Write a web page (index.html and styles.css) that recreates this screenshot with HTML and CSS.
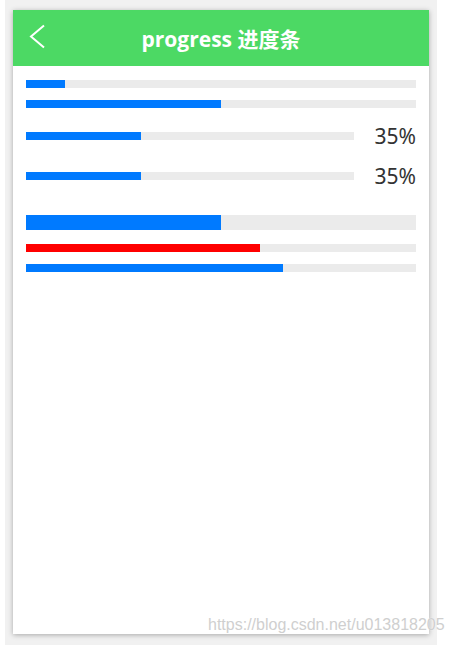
FILE: index.html
```html
<html>
  <head>
    <meta charset="UTF-8">
    <title>progress 进度条</title>
    <link rel="stylesheet" href="styles.css">
  </head>
  <body>
    <div class="frame">
      <div class="phone">
        <header class="bar-head">
          <svg class="back" width="18" height="26" viewBox="0 0 18 26">
            <polyline points="15,1.5 2,12.5 15,23.5" fill="none" stroke="#fff" stroke-width="2"/>
          </svg>
          <h1 class="title">progress 进度条</h1>
        </header>

        <div class="content">
          <!-- 基本 -->
          <div class="progress thin first"><span style="width: 10%"></span></div>
          <div class="progress thin m12"><span style="width: 50%"></span></div>

          <!-- 数字付き -->
          <div class="row m13">
            <div class="progress thin"><span style="width: 35%"></span></div>
            <div class="num">35%</div>
          </div>
          <div class="row m10">
            <div class="progress thin"><span style="width: 35%"></span></div>
            <div class="num">35%</div>
          </div>

          <!-- 色・高さ -->
          <div class="progress thick m24"><span style="width: 50%"></span></div>
          <div class="progress thin red m14"><span style="width: 60%"></span></div>
          <div class="progress thin m12"><span style="width: 66%"></span></div>
        </div>
      </div>
    </div>
    <div class="mark">https://blog.csdn.net/u013818205</div>
  </body>
</html>
```

FILE: styles.css
```css
body {
  margin: 0;
  background: #fff;
  font-family: 'Open Sans', 'Noto Sans CJK SC', sans-serif;
}

.frame {
  box-sizing: border-box;
  width: 432px;
  height: 645px;
  margin-left: 5px;
  padding: 10px 8px 11px 8px;
  background: #f1f1f1;
}

.phone {
  height: 100%;
  background: #fff;
  box-shadow: 0 1px 5px rgba(0, 0, 0, 0.3);
}

.bar-head {
  position: relative;
  height: 56px;
  background: #4cd964;
  display: flex;
  align-items: center;
  justify-content: center;
}

.back {
  position: absolute;
  left: 16px;
  top: 14px;
}

.title {
  margin: 0;
  color: #fff;
  font-size: 21px;
  font-weight: bold;
  font-family: 'Open Sans', 'Noto Sans CJK SC', sans-serif;
}

.content {
  padding: 14px 13px;
}

.progress {
  background: #ebebeb;
}

.progress span {
  display: block;
  height: 100%;
  background: #007aff;
}

.progress.thin {
  height: 8px;
}

.progress.thick {
  height: 15px;
}

.progress.red span {
  background: #ff0000;
}

.row {
  height: 30px;
  display: flex;
  align-items: center;
}

.row .progress {
  flex: 1;
}

.num {
  width: 62px;
  text-align: right;
  font-size: 21px;
  color: #333;
  font-family: 'Noto Sans', sans-serif;
}

.m10 { margin-top: 10px; }
.m12 { margin-top: 12px; }
.m13 { margin-top: 13px; }
.m14 { margin-top: 14px; }
.m24 { margin-top: 24px; }

.mark {
  position: absolute;
  left: 208px;
  top: 616px;
  font-family: 'Liberation Sans', Arial, sans-serif;
  font-size: 16px;
  color: #cfcfcf;
  text-shadow: 0 0 1px #fff;
}
```
